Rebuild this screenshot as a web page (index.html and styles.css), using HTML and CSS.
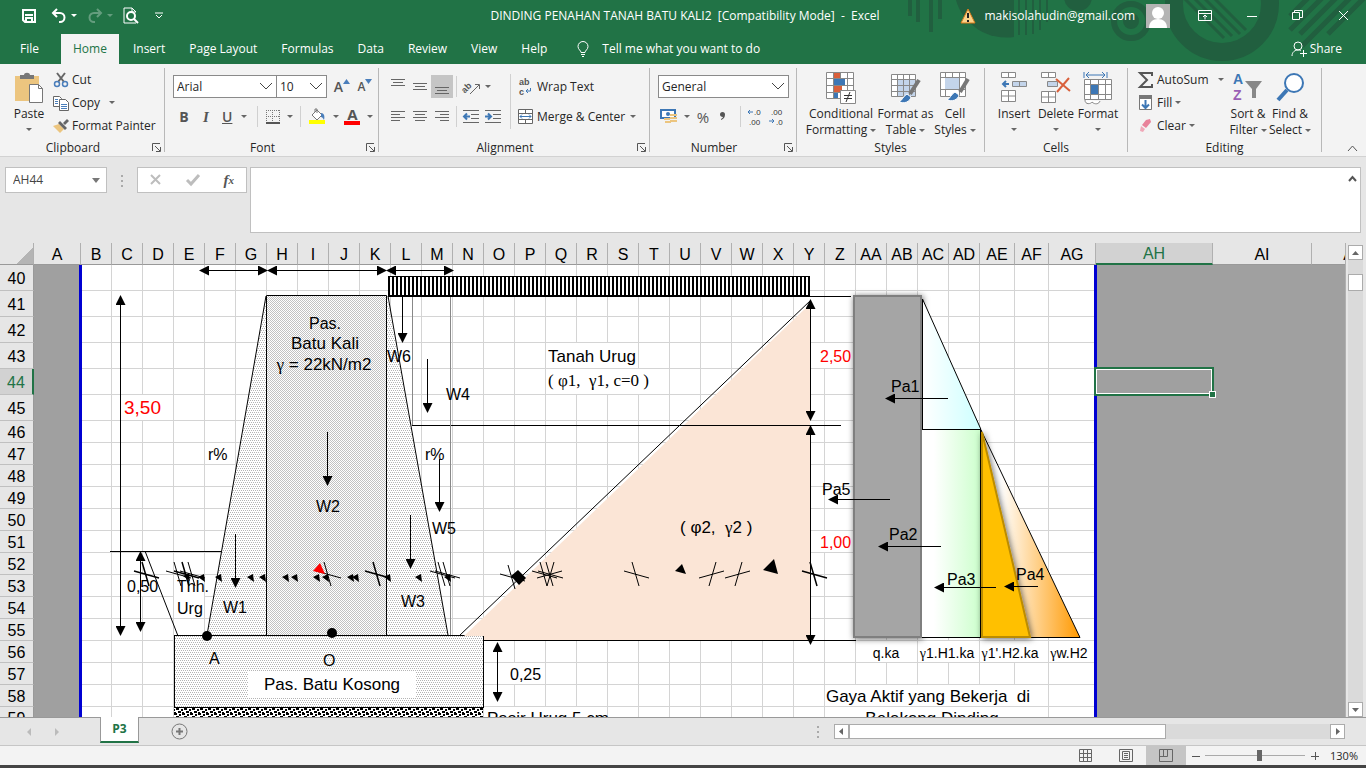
FILE: index.html
```html
<!DOCTYPE html>
<html lang="en">
<head>
  <meta charset="UTF-8">
  <title>DINDING PENAHAN TANAH BATU KALI2 - Excel</title>
  <meta name="viewport" content="width=device-width, initial-scale=1.0">
  <link rel="stylesheet" href="styles.css">
</head>
<body>
  <header class="top">
    <svg class="top-art" width="470" height="64" viewBox="896 0 470 64" aria-hidden="true">
      <g fill="none" stroke="#215f3f" stroke-width="4">
        <path d="M910 0V16M918 0V22M931 0V32M940 0V19" />
        <path d="M1019 0V35M1026 0V35M1033 0V34M1040 0V30M1047 0V22" stroke-width="2" />
        <circle cx="1131" cy="21" r="17" stroke-width="6" />
        <circle cx="1222" cy="4" r="48" stroke-width="18" />
        <path d="M1182 -4L1224 38M1190 -6L1232 36M1198 -8L1240 34M1206 -10L1246 30" stroke-width="3" />
        <path d="M1290 16L1312 -6M1290 30L1326 -6M1300 34L1340 -6M1302 46L1354 -6M1328 34L1366 -4" stroke-width="5" />
      </g>
      <g fill="#215f3f">
        <path d="M956 0H1014V37A52 50 0 0 1 956 0Z" />
        <circle cx="1131" cy="21" r="8" />
        <circle cx="1078" cy="-3" r="14" />
      </g>
    </svg>
    <div class="titlebar">
      <div class="quick">
        <button aria-label="Save" class="save"><svg width="16" height="16" fill="none" stroke="#fff" stroke-width="2"><path d="M2 2h12v12H4l-2-2z" /><path d="M4 7h8M5 14v-4h6v4" /></svg></button>
        <button aria-label="Undo" class="split"><svg width="16" height="16" fill="none" stroke="#fff" stroke-width="2"><path d="M6 1L2 5l4 4M2 5h7a4 4 0 0 1 0 9H8" /></svg><i class="caret"></i></button>
        <button aria-label="Redo" class="split faded"><svg width="16" height="16" fill="none" stroke="#fff" stroke-width="2"><path d="M10 1l4 4-4 4M14 5H7a4 4 0 0 0 0 9h1" /></svg><i class="caret"></i></button>
        <button aria-label="Print Preview" class="preview"><svg width="16" height="17" fill="none" stroke="#fff"><path d="M13 16H1V1h8l4 4M9 1v4h4" /><circle cx="8" cy="9" r="4" stroke-width="2" /><path d="M11 12l4 4" stroke-width="2" /></svg></button>
        <button aria-label="Customize Quick Access Toolbar"><svg width="10" height="8" fill="none" stroke="#fff"><path d="M1 1h8M2 3l3 3 3-3" /></svg></button>
      </div>
      <h1>DINDING PENAHAN TANAH BATU KALI2&nbsp; [Compatibility Mode]&nbsp; -&nbsp; Excel</h1>
      <div class="account">
        <svg width="16" height="16"><path d="M8 1L15 15H1z" fill="#fbd38a" stroke="#d87a1a" /><path d="M8 5v5M8 12v2" stroke="#222" stroke-width="2" /></svg>
        <span class="mail">makisolahudin@gmail.com</span>
        <svg class="avatar" width="24" height="24"><rect width="24" height="24" fill="#b4b4b4" /><circle cx="12" cy="9" r="6" fill="#fff" /><path d="M3 24c0-6 4-9 9-9s9 3 9 9z" fill="#fff" /></svg>
        <button aria-label="Ribbon Display Options"><svg width="14" height="11" fill="none" stroke="#fff"><path d="M.5.5h13v10H.5zM.5 3.500h13M7 9.500V5M5 7l2-2 2 2" /></svg></button>
        <button aria-label="Minimize"><svg width="10" height="10" stroke="#fff"><path d="M0 5.500h10" /></svg></button>
        <button aria-label="Restore"><svg width="11" height="11" fill="none" stroke="#fff"><path d="M.5 2.500h7v7h-7zM2.500 2.500v-2h8v7h-3" /></svg></button>
        <button aria-label="Close"><svg width="11" height="11" stroke="#fff"><path d="M1 1l9 9M10 1l-9 9" /></svg></button>
      </div>
    </div>
    <nav class="tabs">
      <button class="file">File</button>
      <button class="active">Home</button>
      <button>Insert</button>
      <button>Page Layout</button>
      <button>Formulas</button>
      <button>Data</button>
      <button>Review</button>
      <button>View</button>
      <button>Help</button>
      <button class="tell"><svg width="12" height="16" fill="none" stroke="#fff"><path d="M4 11.500c0-2-3-3-3-6a5 5 0 0 1 10 0c0 3-3 4-3 6zM4 13.500h4M5 15.500h2" /></svg>Tell me what you want to do</button>
      <button class="share"><svg width="16" height="16" fill="none" stroke="#fff"><circle cx="7" cy="5" r="4" /><path d="M1 15c0-4 3-6 6-6 1 0 2 0 3 1M12.500 9v7M9 12.500h7" /></svg>Share</button>
    </nav>
  </header>

  <section class="ribbon">
    <div class="group g-clipboard">
      <div class="tools">
        <button class="big"><svg width="30" height="32"><path d="M1 4h24v25H1z" fill="#ecc57f" /><path d="M6 7V3h4c0-3 6-3 6 0h4v4z" fill="#777" /><path d="M15.500 12.500h9l4 4v14h-13z" fill="#fff" stroke="#777" /><path d="M24.500 12.500v4h4" fill="none" stroke="#777" /></svg>Paste<i class="caret"></i></button>
        <div class="stack">
          <button class="small"><svg width="16" height="16" fill="none" stroke-width="2"><path d="M4 1l7 9M12 1L5 10" stroke="#666" /><circle cx="4" cy="12" r="2.500" stroke="#4a7ebb" stroke-width="1.500" /><circle cx="12" cy="12" r="2.500" stroke="#4a7ebb" stroke-width="1.500" /></svg>Cut</button>
          <button class="small"><svg width="16" height="16" fill="#fff" stroke="#666"><path d="M.5 1.500h6l2 2v8h-8z" /><path d="M6.500 4.500h6l3 3v8h-9z" /><path d="M2 4.500h3M2 6.500h3M2 8.500h3M8 9.500h6M8 11.500h6M8 13.500h6" stroke="#4a7ebb" /></svg>Copy<i class="caret wide"></i></button>
          <button class="small"><svg width="16" height="16"><path d="M0 8l6-2 5 5-4 4z" fill="#ecc57f" /><path d="M5 5l2-2 7 7-2 2zM10 5l4-4 2 2-4 4z" fill="#666" /></svg>Format Painter</button>
        </div>
      </div>
      <footer>Clipboard</footer><button class="launch" aria-label="Clipboard settings"><svg width="9" height="9" fill="none" stroke="#555"><path d="M.5 8V.5H8M3 3l5 5M8.500 4v4.500H4" /></svg></button>
    </div>

    <div class="group g-font">
      <div class="rows">
        <div class="row">
          <select class="font-name" aria-label="Font"><option>Arial</option></select><select class="font-size" aria-label="Font size"><option>10</option></select>
          <button class="letter grow" aria-label="Increase font size">A<svg width="7" height="5"><path d="M0 5l3.500-5L7 5z" fill="#4a7ebb" /></svg></button>
          <button class="letter shrink" aria-label="Decrease font size">A<svg width="7" height="5"><path d="M0 0l3.500 5L7 0z" fill="#4a7ebb" /></svg></button>
        </div>
        <div class="row">
          <button class="letter"><b>B</b></button>
          <button class="letter"><em>I</em></button>
          <button class="letter under"><u>U</u><i class="caret"></i></button>
          <span class="sep"></span>
          <button aria-label="Borders"><svg width="14" height="14" fill="none" stroke="#777"><path d="M.5 0v13M6.500 0v13M13.500 0v13M0 .5h14M0 6.500h14" stroke-dasharray="1 1" /><path d="M0 13h14" stroke-width="2" stroke="#555" /></svg><i class="caret"></i></button>
          <span class="sep"></span>
          <button aria-label="Fill Color"><svg width="17" height="17"><path d="M3 7l5-5 5 5-5 5z" fill="#fff" stroke="#777" /><path d="M6 4V1h2v4" fill="none" stroke="#777" /><path d="M12 5c3 0 4 3 3 7-1-2-2-3-3-3z" fill="#4a7ebb" /><path d="M0 12h16v4H0z" fill="#ff0" /></svg><i class="caret"></i></button>
          <button aria-label="Font Color" class="font-color"><span>A</span><i class="caret"></i></button>
        </div>
      </div>
      <footer>Font</footer><button class="launch" aria-label="Font settings"><svg width="9" height="9" fill="none" stroke="#555"><path d="M.5 8V.5H8M3 3l5 5M8.500 4v4.500H4" /></svg></button>
    </div>

    <div class="group g-align">
      <div class="tools">
        <div class="rows">
          <div class="row">
            <button class="ic" aria-label="Top Align"><svg width="14" height="18" stroke="#666"><path d="M0 1.500h14M2 4.500h10M0 7.500h14" /></svg></button>
            <button class="ic" aria-label="Middle Align"><svg width="14" height="16" stroke="#666"><path d="M0 4.500h14M2 7.500h10M0 10.500h14" /></svg></button>
            <button class="ic on" aria-label="Bottom Align"><svg width="14" height="14" stroke="#666"><path d="M0 7.500h14M2 10.500h10M0 13.500h14" /></svg></button>
            <span class="sep"></span>
            <button aria-label="Orientation"><svg width="17" height="16" stroke="#666" fill="none"><text class="glyph" x="-2" y="10" transform="rotate(-45 5 9)" fill="#555" stroke="none">ab</text><path d="M6 15L15 6M11 5.500h4.500V10" /></svg><i class="caret"></i></button>
          </div>
          <div class="row">
            <button class="ic" aria-label="Align Left"><svg width="14" height="12" stroke="#666"><path d="M0 .5h14M0 3.500h9M0 6.500h14M0 9.500h9" /></svg></button>
            <button class="ic" aria-label="Center"><svg width="14" height="12" stroke="#666"><path d="M0 .5h14M2 3.500h10M0 6.500h14M2 9.500h10" /></svg></button>
            <button class="ic" aria-label="Align Right"><svg width="14" height="12" stroke="#666"><path d="M0 .5h14M5 3.500h9M0 6.500h14M5 9.500h9" /></svg></button>
            <span class="sep"></span>
            <button class="ic" aria-label="Decrease Indent"><svg width="16" height="14" stroke="#666"><path d="M0 .5h16M8 4.500h8M8 8.500h8M0 12.500h16" /><path d="M7 6.500H1M4 3.500L1 6.500l3 3" fill="none" stroke="#3d77b5" stroke-width="2" /></svg></button>
            <button class="ic" aria-label="Increase Indent"><svg width="16" height="14" stroke="#666"><path d="M0 .5h16M8 4.500h8M8 8.500h8M0 12.500h16" /><path d="M0 6.500h6M3 3.500l3 3-3 3" fill="none" stroke="#3d77b5" stroke-width="2" /></svg></button>
          </div>
        </div>
        <span class="sep tall"></span>
        <div class="rows">
          <button class="row small"><svg width="16" height="18"><text class="glyph" x="1" y="7" fill="#555">ab</text><text class="glyph" x="1" y="17" fill="#555">c</text><path d="M12.500 10v3H8M10 11l-2 2 2 2" fill="none" stroke="#3d77b5" /></svg>Wrap Text</button>
          <button class="row small"><svg width="16" height="16" fill="none" stroke="#666"><path d="M.5.5h14v14H.5zM.5 4.500h14M.5 10.500h14M7.500.5v4M7.500 10.500v4" fill="#fff" /><path d="M2 7.500h11M4 5.500l-2 2 2 2M11 5.500l2 2-2 2" stroke="#3d77b5" /></svg>Merge &amp; Center<i class="caret wide"></i></button>
        </div>
      </div>
      <footer>Alignment</footer><button class="launch" aria-label="Alignment settings"><svg width="9" height="9" fill="none" stroke="#555"><path d="M.5 8V.5H8M3 3l5 5M8.500 4v4.500H4" /></svg></button>
    </div>

    <div class="group g-number">
      <div class="rows">
        <div class="row"><select class="num-format" aria-label="Number format"><option>General</option></select></div>
        <div class="row">
          <button class="money" aria-label="Accounting format"><svg width="17" height="17"><path d="M1 2h14v8H1z" fill="#fff" stroke="#3d77b5" stroke-width="2" /><circle cx="8" cy="6" r="2" fill="#3d77b5" /><g fill="#ecc57f"><rect x="10" y="6" width="7" height="2" /><rect x="10" y="9" width="7" height="2" /><rect x="10" y="12" width="7" height="2" /><rect x="4" y="10" width="6" height="2" /><rect x="5" y="13" width="6" height="2" /></g></svg><i class="caret"></i></button>
          <button class="letter percent">%</button>
          <button class="letter comma" aria-label="Comma style"><svg width="6" height="9"><path d="M0 2.500a2.500 2.500 0 0 1 5 0C5 5 4 7 1 8V7c1-1 2-1 2-2C1 5 0 4 0 2.500z" fill="#555" /></svg></button>
          <span class="sep"></span>
          <button aria-label="Increase Decimal"><svg width="16" height="18"><text class="digit" x="7" y="7">.0</text><text class="digit" x="2" y="17">.00</text><path d="M6 4H1M3 2L1 4l2 2" fill="none" stroke="#3d77b5" /></svg></button>
          <button aria-label="Decrease Decimal"><svg width="16" height="18"><text class="digit" x="2" y="7">.00</text><text class="digit" x="7" y="17">.0</text><path d="M0 13h5M3 11l2 2-2 2" fill="none" stroke="#3d77b5" /></svg></button>
        </div>
      </div>
      <footer>Number</footer><button class="launch" aria-label="Number settings"><svg width="9" height="9" fill="none" stroke="#555"><path d="M.5 8V.5H8M3 3l5 5M8.500 4v4.500H4" /></svg></button>
    </div>

    <div class="group g-styles">
      <div class="tools">
        <button class="big w70"><svg width="30" height="32" fill="none" stroke="#888"><path d="M.5.5h27v26H.5z" fill="#fff" /><path d="M8 1h6v6H8zM8 14h8v6H8z" fill="#d9603b" stroke="none" /><path d="M8 7h11v6H8zM8 21h4v5H8z" fill="#3d77b5" stroke="none" /><path d="M.5 6.500h27M.5 13.500h27M.5 20.500h27M7.500.5v26M14.500.5v6M21.500.5v26" /><path d="M14.500 18.500h15v13h-15z" fill="#fff" /><path d="M18 23.500h8M18 26.500h8M24 20l-4 10" stroke="#333" /></svg><span>Conditional<br>Formatting<i class="caret"></i></span></button>
        <button class="big w58"><svg width="30" height="32" fill="none" stroke="#888"><path d="M.5 2.500h24v22H.5z" fill="#fff" /><path d="M7 8h17v16H7z" fill="#c3d4ea" stroke="none" /><path d="M.5 7.500h24M.5 13.500h24M.5 19.500h24M6.500 2.500v22M12.500 2.500v22M18.500 2.500v22" /><path d="M28 8l-9 14" stroke="#777" stroke-width="4" /><path d="M8 30c3-1 4-6 8-8l4 3c-1 5-7 7-12 5z" fill="#3d77b5" stroke="#fff" /></svg><span>Format as<br>Table<i class="caret"></i></span></button>
        <button class="big w42"><svg width="30" height="32" fill="none" stroke="#888"><path d="M.5.5h25v24H.5z" fill="#fff" /><path d="M.5 5.500h25M.5 17.500h25M5.500.5v24M19.500.5v24M12.500.5v5" /><path d="M5 6h14v11H5z" fill="#c3d4ea" stroke="none" /><path d="M28 7l-8 13" stroke="#777" stroke-width="4" /><path d="M7 28c3-1 4-6 8-8l4 3c-1 5-7 7-12 5z" fill="#3d77b5" stroke="#fff" /></svg><span>Cell<br>Styles<i class="caret"></i></span></button>
      </div>
      <footer>Styles</footer>
    </div>

    <div class="group g-cells">
      <div class="tools">
        <button class="big w42"><svg width="28" height="32" fill="#fff" stroke="#888"><path d="M1.500.5h14v5h-14zM8.500.5v5M1.500 18.500h14v11h-14zM8.500 18.500v11M1.500 24h14" /><path d="M12.500 9.500h14v5h-14zM19.500 9.500v5" fill="#c3d4ea" /><path d="M9 12H3M6 9l-3 3 3 3" fill="none" stroke="#3d77b5" stroke-width="2" /></svg>Insert<i class="caret"></i></button>
        <button class="big w42"><svg width="30" height="32" fill="#fff" stroke="#888"><path d="M.5.5h14v5H.5zM7.500.5v5M.5 19.500h14v11H.5zM7.500 19.500v11M.5 25h14" /><path d="M6.500 9.500h10v5h-10z" fill="#c3d4ea" /><path d="M15 7l14 12M28 6L16 20" fill="none" stroke="#d9603b" stroke-width="2" /></svg>Delete<i class="caret"></i></button>
        <button class="big w42"><svg width="30" height="34" fill="#fff" stroke="#888"><path d="M1.500 7.500h27v20h-27zM1.500 12.500h27M1.500 22.500h27M7.500 7.500v20M15.500 7.500v20M22.500 7.500v20M2 28c0 5 6 4 7 2 3 3 7 2 8-1" /><path d="M8 13h7v9H8z" fill="#3d77b5" stroke="none" /><path d="M1 0v6M24 0v6M3 3h19M6 0L3 3l3 3M19 0l3 3-3 3" fill="none" stroke="#3d77b5" /></svg>Format<i class="caret"></i></button>
      </div>
      <footer>Cells</footer>
    </div>

    <div class="group g-editing">
      <div class="tools">
        <div class="stack">
          <button class="small"><svg width="16" height="16" fill="none" stroke="#555" stroke-width="2"><path d="M14 4V1H2l7 7-7 7h12v-3" /></svg>AutoSum<i class="caret wide"></i></button>
          <button class="small"><svg width="16" height="16" fill="#fff" stroke="#777"><path d="M1.500.5h12v14h-12z" /><path d="M1 0h13v4H1z" fill="#777" stroke="none" /><path d="M7.500 5v8M4 9.500l3.500 3.500L11 9.500" fill="none" stroke="#3d77b5" stroke-width="2" /></svg>Fill<i class="caret"></i></button>
          <button class="small"><svg width="16" height="16"><path d="M8 2l4-1 1 3-5 6-4-3z" fill="#e8829a" /><path d="M3 8l4 3-2 3-3-1z" fill="#f0a8b8" /></svg>Clear<i class="caret"></i></button>
        </div>
        <button class="big w42"><svg width="30" height="32"><text class="az" x="0" y="12" fill="#3d77b5">A</text><text class="az" x="0" y="28" fill="#9a5fb5">Z</text><path d="M12 9h17l-6 8v9h-4v-9z" fill="#888" /></svg><span>Sort &amp;<br>Filter<i class="caret"></i></span></button>
        <button class="big w42"><svg width="30" height="32" fill="none" stroke="#3d77b5"><circle cx="19" cy="11" r="9" fill="#fff" stroke-width="2" /><path d="M12 18L3 28" stroke-width="4" /></svg><span>Find &amp;<br>Select<i class="caret"></i></span></button>
      </div>
      <footer>Editing</footer>
    </div>
    <button class="collapse" aria-label="Collapse the Ribbon"><svg width="11" height="7" fill="none" stroke="#555"><path d="M1 6l4.500-5L10 6" /></svg></button>
  </section>

  <section class="formula">
    <select class="name-box" aria-label="Name Box"><option>AH44</option></select>
    <svg class="grip" width="3" height="12" fill="#aaa"><path d="M0 0h2v2H0zM0 5h2v2H0zM0 10h2v2H0z" /></svg>
    <div class="fx">
      <button aria-label="Cancel"><svg width="12" height="12" stroke="#bdbdbd" stroke-width="2"><path d="M1 1l9 9M10 1l-9 9" /></svg></button>
      <button aria-label="Enter"><svg width="14" height="12" fill="none" stroke="#bdbdbd" stroke-width="3"><path d="M1 6l4 4 8-9" /></svg></button>
      <button class="fn" aria-label="Insert Function">f<sub>x</sub></button>
    </div>
    <div class="entry">
      <textarea aria-label="Formula Bar"></textarea>
      <button aria-label="Collapse Formula Bar"><svg width="9" height="6" fill="none" stroke="#555" stroke-width="2"><path d="M1 5l3.500-4L8 5" /></svg></button>
    </div>
  </section>

  <main class="sheet">
    <div class="grid">
      <table id="cells">
        <colgroup></colgroup>
        <thead><tr></tr></thead>
        <tbody></tbody>
      </table>
      <svg class="drawing" width="1312" height="464" viewBox="34 265 1312 464">
        <defs>
          <pattern id="dense" width="4" height="4" patternUnits="userSpaceOnUse"><path d="M0 0h1v1H0zM2 0h1v1H2zM1 1h1v1H1zM3 1h1v1H3zM0 2h1v1H0zM2 2h1v1H2zM1 3h1v1H1zM3 3h1v1H3z" fill="#c2c2c2" /></pattern>
          <pattern id="sparse" width="4" height="4" patternUnits="userSpaceOnUse"><path d="M0 0h1v1H0zM2 0h1v1H2zM1 2h1v1H1zM3 2h1v1H3z" fill="#b4b4b4" /></pattern>
          <pattern id="bars" x="388" width="4" height="20" patternUnits="userSpaceOnUse"><path d="M0 0h2v20H0z" /></pattern>
          <pattern id="gravel" width="8" height="8" y="708" patternUnits="userSpaceOnUse"><path d="M0 0h3v2H0zM5 1h2v2H5zM2 3h3v2H2zM6 4h2v3H6zM0 5h1v2H0zM3 6h2v2H3z" /></pattern>
          <linearGradient id="cyan"><stop offset="0" stop-color="#fff" /><stop offset="1" stop-color="#cff" /></linearGradient>
          <linearGradient id="green"><stop offset=".2" stop-color="#fff" /><stop offset="1" stop-color="#cfc" /></linearGradient>
          <linearGradient id="orange"><stop offset=".2" stop-color="#fff" /><stop offset="1" stop-color="#f90" /></linearGradient>
          <filter id="shadow" x="-20%" y="-20%" width="140%" height="140%"><feDropShadow dx="1" dy="1" stdDeviation="3" flood-opacity=".6" /></filter>
          <marker id="head" markerWidth="10" markerHeight="10" refX="9" refY="5" orient="auto-start-reverse" markerUnits="userSpaceOnUse"><path d="M0 0L10 5 0 10z" /></marker>
          <path id="cross" d="M-13 -4L12 3M-5 -13L2 11" />
          <path id="chip" d="M-4 -1L2 -4 3 4z" />
        </defs>

        <!-- merged cells hide the grid lines -->
        <path fill="#fff" d="M112 395h60v25h-60zM112 575h60v21h-60zM174 575h30v43h-30zM811 343h43v25h-43zM811 531h43v21h-43zM484 663h60v21h-60zM856 641h61v21h-61zM918 641h61v21h-61zM980 641h68v21h-68zM1049 641h45v21h-45zM825 685h223v21H825zM825 707h223v22H825zM484 707h123v22H484zM546 343h92v25h-92zM546 369h108v25H546z" />

        <!-- wall and footing -->
        <path d="M266 296L207 635H266zM387 296L448 635H387zM174 636h309v72H174z" fill="#fff" />
        <path d="M266 296L207 635H266zM387 296L448 635H387zM174 636h309v72H174z" fill="url(#sparse)" />
        <rect x="266" y="295" width="121" height="340" fill="#fff" />
        <rect x="266" y="295" width="121" height="340" fill="url(#dense)" />
        <rect x="174" y="708" width="309" height="20" fill="#fff" />
        <rect x="174" y="708" width="309" height="20" fill="url(#gravel)" />
        <g stroke="#000" fill="none">
          <path d="M266.500 635V295.500H386.500V635" />
          <path d="M266 296L207 635M388 296L448 635" />
          <rect x="174.500" y="635.500" width="309" height="72" />
        </g>
        <rect x="248" y="671" width="168" height="26" fill="#fff" />

        <!-- backfill -->
        <path d="M810 304V640H484V617z" fill="#fbe5d6" />
        <path d="M484 617V636H464z" fill="#fbe5d6" />
        <rect x="388.500" y="276.500" width="421" height="19" fill="#fff" />
        <rect x="388.500" y="276.500" width="421" height="19" fill="url(#bars)" stroke="#000" />
        <g fill="none" stroke="#000">
          <path d="M459 636L811 300M388 296.500H851M412 425.500H841M484 640.500H856M110 551.500H221M145 551L178 636" />
          <path d="M412.500 297V425M450.500 297V635" stroke="#888" />
        </g>

        <!-- pressure diagram -->
        <rect x="854" y="296" width="67" height="341" fill="#a5a5a5" stroke="#7f7f7f" stroke-width="2" filter="url(#shadow)" />
        <g stroke="#000">
          <path d="M922.500 299V429.500H981z" fill="url(#cyan)" />
          <rect x="922" y="430" width="59" height="207" fill="url(#green)" stroke="none" />
          <path d="M922 637.500H1079M922 429.500H981M980.500 430V637" />
          <path d="M981 430L1080 637.500H981z" fill="url(#orange)" />
        </g>
        <path d="M982 432L1030 637H982z" fill="#ffc000" stroke="#bc8c00" stroke-width="2" filter="url(#shadow)" />

        <!-- dimensions and force arrows -->
        <g class="dimension" stroke="#000">
          <path d="M200 270.500H267" /><path d="M268 270.500H386" /><path d="M387 270.500H453" />
          <path d="M120.500 296V635" /><path d="M140.500 552V631" /><path d="M497.500 643V701" />
          <path d="M810.500 300V420" /><path d="M810.500 426V644" />
        </g>
        <g class="force" stroke="#000">
          <path d="M402.500 296V342" /><path d="M427.500 359V412" /><path d="M327.500 432V485" />
          <path d="M439.500 459V511" /><path d="M410.500 515V568" /><path d="M235.500 534V587" />
          <path d="M948 398.500H886" /><path d="M890 499.500H829" /><path d="M941 546.500H879" />
          <path d="M996 587.500H935" /><path d="M1038 586.500H1005" />
        </g>

        <!-- collapsed shapes along row 53 -->
        <g fill="none" stroke="#000">
          <use href="#cross" x="147" y="575" stroke-width="1.500" /><use href="#cross" x="179" y="575" />
          <use href="#cross" x="187" y="575" stroke-width="1.500" /><use href="#cross" x="193" y="575" />
          <use href="#cross" x="329" y="575" /><use href="#cross" x="378" y="575" stroke-width="1.500" />
          <use href="#cross" x="443" y="575" /><use href="#cross" x="448" y="575" />
          <use href="#cross" x="513" y="578" /><use href="#cross" x="545" y="575" /><use href="#cross" x="551" y="575" />
          <use href="#cross" x="637" y="575" /><use href="#cross" x="815" y="575" stroke-width="1.500" />
          <g transform="scale(-1 1)"><use href="#cross" x="-549" y="575" /><use href="#cross" x="-711" y="575" /><use href="#cross" x="-737" y="575" /></g>
        </g>
        <g>
          <use href="#chip" x="187" y="577" /><use href="#chip" x="202" y="578" /><use href="#chip" x="219" y="578" />
          <use href="#chip" x="251" y="578" /><use href="#chip" x="263" y="578" /><use href="#chip" x="286" y="578" />
          <use href="#chip" x="295" y="578" /><use href="#chip" x="317" y="578" /><use href="#chip" x="326" y="578" />
          <use href="#chip" x="351" y="578" /><use href="#chip" x="356" y="578" /><use href="#chip" x="388" y="578" />
          <use href="#chip" x="419" y="578" /><use href="#chip" x="448" y="578" />
          <path d="M511 576L518 570 526 578 519 585zM675 571L682 564 686 574zM763 570L774 559 778 574z" />
          <path d="M313 571L320 563 325 574z" fill="#f00" />
          <circle cx="207" cy="636" r="5" /><circle cx="332" cy="633" r="5" />
        </g>

        <g class="labels">
          <text x="325" y="329" class="mid">Pas.</text>
          <text x="325" y="349" class="mid box">Batu Kali</text>
          <text x="324" y="370" class="mid box"><tspan class="sym">γ</tspan> = 22kN/m2</text>
          <text x="387" y="362">W6</text>
          <text x="446" y="400">W4</text>
          <text x="316" y="512">W2</text>
          <text x="432" y="534">W5</text>
          <text x="401" y="607">W3</text>
          <text x="223" y="613">W1</text>
          <text x="208" y="460">r%</text>
          <text x="425" y="460">r%</text>
          <text x="124" y="414" class="red large">3,50</text>
          <text x="127" y="592">0,50</text>
          <text x="177" y="592">Thh.</text>
          <text x="177" y="614">Urg</text>
          <text x="209" y="664">A</text>
          <text x="323" y="666">O</text>
          <text x="332" y="690" class="mid box">Pas. Batu Kosong</text>
          <text x="510" y="680">0,25</text>
          <text x="487" y="724" class="box">Pasir Urug 5 cm</text>
          <text x="548" y="362" class="box">Tanah Urug</text>
          <text x="548" y="386" class="sym box">( φ1,&#160; γ1, c=0 )</text>
          <text x="680" y="533" class="box">( φ2,&#160; <tspan class="sym">γ</tspan>2 )</text>
          <text x="820" y="362" class="red">2,50</text>
          <text x="820" y="548" class="red">1,00</text>
          <text x="891" y="392">Pa1</text>
          <text x="822" y="495">Pa5</text>
          <text x="889" y="540">Pa2</text>
          <text x="947" y="585">Pa3</text>
          <text x="1016" y="580">Pa4</text>
          <text x="886" y="658" class="mid note">q.ka</text>
          <text x="947" y="658" class="mid note"><tspan class="sym">γ</tspan>1.H1.ka</text>
          <text x="1010" y="658" class="mid note"><tspan class="sym">γ</tspan>1'.H2.ka</text>
          <text x="1069" y="658" class="mid note"><tspan class="sym">γ</tspan>w.H2</text>
          <text x="928" y="702" class="mid box">Gaya Aktif yang Bekerja&#160; di</text>
          <text x="932" y="724" class="mid box">Belakang Dinding</text>
        </g>

        <!-- print area edges and the selected cell -->
        <path d="M79 265h3v464h-3zM1094 265h3v464h-3z" fill="#0000d2" />
        <rect x="1096.500" y="369.500" width="115" height="24" fill="#a0a0a0" stroke="#fff" />
        <rect x="1095" y="368" width="118" height="27" fill="none" stroke="#217346" stroke-width="2" />
        <rect x="1209.500" y="391.500" width="6" height="6" fill="#217346" stroke="#fff" />
      </svg>
    </div>
    <div class="vscroll">
      <button aria-label="Scroll up"><svg width="7" height="4"><path d="M0 4l3.500-4L7 4z" fill="#666" /></svg></button>
      <div class="track"><span class="thumb"></span></div>
      <button aria-label="Scroll down"><svg width="7" height="4"><path d="M0 0h7L3.500 4z" fill="#666" /></svg></button>
    </div>
  </main>

  <section class="sheetbar">
    <button class="nav" aria-label="Previous sheets"><svg width="4" height="8"><path d="M4 0v8L0 4z" fill="#bbb" /></svg></button>
    <button class="nav" aria-label="Next sheets"><svg width="4" height="8"><path d="M0 0v8l4-4z" fill="#bbb" /></svg></button>
    <button class="sheet-tab">P3</button>
    <button class="add" aria-label="New sheet"><svg width="17" height="17" fill="none" stroke="#777"><circle cx="8.500" cy="8.500" r="7.500" /><path d="M8.500 5v7M5 8.500h7" stroke-width="2" /></svg></button>
    <div class="hside">
      <svg class="grip" width="3" height="12" fill="#aaa"><path d="M0 0h2v2H0zM0 5h2v2H0zM0 10h2v2H0z" /></svg>
      <div class="hscroll">
        <button aria-label="Scroll left"><svg width="4" height="7"><path d="M4 0v7L0 3.500z" fill="#666" /></svg></button>
        <div class="track"><span class="thumb"></span></div>
        <button aria-label="Scroll right"><svg width="4" height="7"><path d="M0 0v7l4-3.500z" fill="#666" /></svg></button>
      </div>
    </div>
  </section>

  <footer class="status">
    <button aria-label="Normal"><svg width="14" height="13" fill="none" stroke="#666"><path d="M.5.500h12v12H.5zM.5 4.500h12M.5 8.500h12M4.500.5v12M8.500.5v12" /></svg></button>
    <button aria-label="Page Layout"><svg width="14" height="13" fill="none" stroke="#666"><path d="M.5.500h13v12H.5zM3.500 2.500h7v8h-7zM5 4.500h4M5 6.500h4M5 8.500h4" /></svg></button>
    <button class="on" aria-label="Page Break Preview"><svg width="14" height="13" fill="none" stroke="#666"><path d="M.5.500h13v12H.5zM.5 7.500h8v-7M4.500.5v7" /></svg></button>
    <button class="step" aria-label="Zoom out"><svg width="8" height="8" stroke="#555"><path d="M0 4.500h8" /></svg></button>
    <input type="range" min="0" max="100" value="55" aria-label="Zoom">
    <button class="step" aria-label="Zoom in"><svg width="8" height="8" stroke="#555"><path d="M0 4.500h8M4.500 0v8" /></svg></button>
    <span class="percent">130%</span>
  </footer>

  <script>
    // Column widths and row heights of the visible range
    const columns = [["A", 47]];
    "B C D E F G H I J K L M N O P Q R S T U V W X Y Z AA AB AC AD".split(" ").forEach(c => columns.push([c, 31]));
    columns.push(["AE", 35], ["AF", 34], ["AG", 47], ["AH", 117], ["AI", 99], ["AJ", 82]);
    const outside = ["A", "AH", "AI", "AJ"];

    const table = document.getElementById('cells');
    const cols = table.querySelector('colgroup');
    const head = table.querySelector('thead tr');
    const body = table.querySelector('tbody');

    cols.innerHTML = '<col style="width:34px">' + columns.map(c => `<col style="width:${c[1]}px">`).join('');
    head.innerHTML = '<th class="corner"></th>' + columns.map(c => `<th class="${c[0] === 'AH' ? 'current' : ''}">${c[0]}</th>`).join('');

    for (let row = 40; row < 60; row++) {
      const tr = document.createElement('tr');
      tr.className = row < 46 ? 'tall' : '';
      tr.innerHTML = `<th class="${row === 44 ? 'current' : ''}">${row}</th>` +
        columns.map(c => `<td class="${outside.includes(c[0]) ? 'outside' : ''}"></td>`).join('');
      body.appendChild(tr);
    }
  </script>
</body>
</html>
```
FILE: styles.css
```css
/* Reset and base styles */
* { box-sizing: border-box; margin: 0; padding: 0; }
body {
  font-family: "Open Sans", "Noto Sans", sans-serif;
  font-size: 12px;
  line-height: 16px;
  color: #262626;
  background: #e6e6e6;
  height: 100vh;
  display: flex;
  flex-direction: column;
  overflow: hidden;
}
button, select, textarea {
  font: inherit;
  color: inherit;
  background: none;
  border: none;
  white-space: nowrap;
}
button {
  display: flex;
  align-items: center;
  justify-content: center;
}
svg { flex: none; overflow: visible; }
.caret {
  flex: none;
  display: inline-block;
  border: 3px solid transparent;
  border-top-color: #666;
  border-bottom: none;
  vertical-align: middle;
}

/* Title bar and tabs */
.top {
  position: relative;
  background: #217346;
  color: #fff;
  flex: none;
}
.top-art { position: absolute; top: 0; right: 0; overflow: hidden; }
.titlebar, .tabs { position: relative; display: flex; }
.titlebar { height: 31px; align-items: center; }
.titlebar h1 { font-size: 12px; font-weight: 400; white-space: nowrap; }
.quick { flex: 1; display: flex; align-items: center; padding-left: 21px; gap: 10px; }
.quick .save { margin-right: 4px; }
.quick .split { gap: 4px; }
.quick .caret { border-top-color: #fff; }
.faded { opacity: .3; }
.quick .preview { margin-right: 5px; }
.account {
  flex: 1;
  display: flex;
  align-items: center;
  justify-content: flex-end;
  padding-right: 17px;
}
.account .mail { margin: 0 11px 0 8px; }
.account .avatar { margin-right: 28px; }
.account button + button { margin-left: 35px; }
.tabs { height: 33px; padding: 3px 24px 0 8px; }
.tabs button { padding: 0 12px; }
.tabs .file { margin-right: 10px; }
.tabs .active { background: #f3f3f3; color: #217346; margin-right: 2px; }
.tabs .tell { gap: 13px; padding-left: 18px; }
.tabs .share { margin-left: auto; padding: 0; gap: 3px; }

/* Ribbon */
.ribbon {
  flex: none;
  display: flex;
  height: 93px;
  padding: 4px 0;
  background: #f3f3f3;
  border-bottom: 1px solid #d2d2d2;
}
.group {
  position: relative;
  flex: none;
  display: flex;
  flex-direction: column;
  border-right: 1px solid #b8b8b8;
}
.group footer { margin: auto 0 -4px; text-align: center; }
.g-clipboard { width: 165px; }
.g-clipboard footer { padding-right: 18px; }
.g-font { width: 214px; padding-left: 8px; }
.g-font footer { padding-right: 26px; }
.g-align { width: 271px; padding-left: 8px; }
.g-align footer { padding-right: 26px; }
.g-number { width: 147px; padding-left: 8px; }
.g-number footer { padding-right: 26px; }
.g-styles { width: 188px; }
.g-cells { width: 143px; }
.g-editing { width: 194px; }
.g-styles .tools { padding-left: 8px; }
.g-cells .tools { padding-left: 8px; }
.g-editing .tools { padding-left: 10px; }
.g-clipboard .tools { padding-left: 10px; }
.launch { position: absolute; right: 3px; bottom: 0; }
.tools { display: flex; height: 72px; }
.stack, .rows { display: flex; flex-direction: column; }
.rows { gap: 7px; padding-top: 7px; }
.row { display: flex; align-items: center; height: 23px; }
.big {
  flex-direction: column;
  justify-content: flex-start;
  padding-top: 4px;
  width: 38px;
  margin-right: 5px;
}
.big svg { height: 34px; }
.big > .caret { margin-top: 6px; }
.big span .caret { margin-left: 3px; }
.w70 { width: 72px; margin: 0; }
.w58 { width: 57px; margin: 0; }
.w42 { width: 42px; margin: 0; }
.small { gap: 3px; height: 23px; justify-content: flex-start; }
.small .wide { margin-left: 6px; }
.g-editing .stack { width: 89px; }
.sep { width: 1px; height: 21px; background: #d0d0d0; }
.sep.tall { height: 55px; margin: 6px 7px 0 6px; }
.collapse { margin: auto 8px -2px auto; height: 12px; }

select {
  height: 23px;
  padding: 0 3px;
  background: #fff url("data:image/svg+xml,%3Csvg xmlns='http://www.w3.org/2000/svg' width='14' height='9' fill='none' stroke='%23444'%3E%3Cpath d='M1 1l6 6 6-6'/%3E%3C/svg%3E") no-repeat right 3px center;
  border: 1px solid #8a8a8a;
  appearance: none;
}
.font-name { width: 104px; }
.font-size { width: 51px; margin-left: -1px; }
.num-format { width: 131px; }

.letter { min-width: 22px; font-size: 14px; color: #555; gap: 5px; }
.g-font .row:first-child .letter { font-weight: 600; gap: 0; align-items: flex-start; }
.g-font .grow { margin-left: 4px; }
.g-font .shrink { font-size: 12px; margin-left: 1px; }
.letter em { font-family: "Liberation Serif", serif; font-weight: 700; font-size: 15px; }
.letter u { font-weight: 600; }
.g-font .under { gap: 9px; margin: 0 3px 0 5px; }
.g-font .sep { margin: 0 8px 0 7px; }
.g-font .row button:not(.letter) { gap: 7px; }
.g-font .font-color { margin-left: 5px; }
.font-color span {
  width: 16px;
  height: 17px;
  line-height: 13px;
  font-size: 15px;
  font-weight: 700;
  color: #555;
  border-bottom: 4px solid #f00;
}
.g-align .ic { width: 22px; height: 23px; }
.g-align .on { background: #c5c5c5; }
.g-align .sep:not(.tall) { margin: 0 3px; }
.g-align .row > button { gap: 4px; }
.g-align .row > button:not(.ic) { margin-left: 4px; }
.g-align .small .wide { margin-left: 2px; }
.glyph { font: 700 9px "Liberation Sans", sans-serif; }
.digit { font: 8px "Liberation Sans", sans-serif; fill: #333; }
.az { font: 700 14px "Liberation Sans", sans-serif; }
.g-number .row { gap: 6px; }
.g-number .money { gap: 7px; padding-left: 2px; }
.g-number .letter { min-width: 14px; }
.g-number .percent { font-size: 15px; }
.g-number .comma { margin-right: 4px; }

/* Formula bar */
.formula {
  flex: none;
  display: flex;
  align-items: flex-start;
  height: 86px;
  padding: 10px 5px 0;
}
.name-box, .fx, .entry { background-color: #fff; border: 1px solid #c0c0c0; }
.name-box {
  width: 102px;
  height: 26px;
  padding-left: 7px;
  color: #444;
  background-image: url("data:image/svg+xml,%3Csvg xmlns='http://www.w3.org/2000/svg' width='8' height='5' fill='%23777'%3E%3Cpath d='M0 0h8L4 5z'/%3E%3C/svg%3E");
  background-position: right 6px center;
}
.formula .grip { margin: 8px 13px 0 14px; }
.fx { display: flex; justify-content: space-around; width: 110px; height: 26px; }
.fx .fn { font: italic 700 15px "Liberation Serif", serif; color: #555; }
.fx sub { font-size: 11px; }
.entry { flex: 1; display: flex; align-items: flex-start; height: 66px; margin-left: 3px; }
.entry textarea { flex: 1; height: 100%; resize: none; padding: 3px; }
.entry button { width: 16px; height: 22px; }

/* Sheet */
.sheet { flex: 1; min-height: 0; display: flex; }
.grid {
  position: relative;
  flex: 1;
  min-width: 0;
  overflow: hidden;
  background: #a0a0a0;
  border-right: 1px solid #b0b0b0;
}
#cells {
  width: 1345px;
  table-layout: fixed;
  border-spacing: 0;
  font: 16px/19px "Liberation Sans", Arial, sans-serif;
  color: #000;
}
#cells th {
  height: 22px;
  padding-top: 2px;
  overflow: hidden;
  font-weight: 400;
  background: #e6e6e6;
  border-right: 1px solid #b0b0b0;
  border-bottom: 1px solid #999;
}
#cells tbody th { border-right-color: #999; border-bottom-color: #c0c0c0; }
#cells thead .current { color: #217346; background: #d2d2d2; border-bottom: 2px solid #217346; padding-top: 1px; }
#cells tbody .current { color: #217346; background: #d2d2d2; border-right: 2px solid #217346; }
#cells .corner { background: linear-gradient(135deg, #e6e6e6 70%, #b4b4b4 70%); }
#cells td { background: #fff; border-right: 1px solid #d4d4d4; border-bottom: 1px solid #d4d4d4; }
#cells .outside { background: #a0a0a0; border-color: #a0a0a0; }
#cells .tall { height: 26px; }
.drawing {
  position: absolute;
  left: 34px;
  top: 22px;
  font: 16px "Liberation Sans", Arial, sans-serif;
}
.force path, .dimension path { marker-end: url(#head); }
.dimension path { marker-start: url(#head); }
.labels .mid { text-anchor: middle; }
.labels .box { font-size: 17px; }
.labels .red { fill: #f00; }
.labels .large { font-size: 19px; }
.labels .note { font-size: 14px; }
.labels .sym { font-family: "Liberation Serif", serif; }

/* Scroll bars */
.vscroll { width: 20px; padding: 2px 3px 0 2px; display: flex; flex-direction: column; }
.vscroll button, .hscroll button { flex: none; width: 15px; height: 15px; background: #fff; border: 1px solid #ababab; }
.track { flex: 1; background: #dadada; }
.thumb { display: block; background: #fff; border: 1px solid #ababab; }
.vscroll .track { padding-top: 14px; }
.vscroll .thumb { height: 17px; }
.hside { width: 40%; height: 27px; margin-left: auto; display: flex; align-items: center; gap: 14px; padding-right: 6px; }
.hscroll { flex: 1; display: flex; }
.hscroll .thumb { width: 66%; height: 15px; }

/* Sheet tabs */
.sheetbar {
  flex: none;
  display: flex;
  align-items: flex-start;
  height: 28px;
  padding: 0 15px;
  border-top: 1px solid #999;
}
.sheetbar .nav { width: 28px; height: 27px; }
.sheet-tab {
  width: 39px;
  height: 26px;
  margin: -1px 0 0 29px;
  background: #fff;
  border: solid #999;
  border-width: 0 1px;
  border-bottom: 2px solid #217346;
  color: #217346;
  font-weight: 700;
}
.add { margin-left: 32px; height: 27px; }

/* Status bar */
.status {
  flex: none;
  display: flex;
  align-items: center;
  justify-content: flex-end;
  height: 23px;
  padding-right: 8px;
  background: #f3f3f3;
  border-top: 1px solid #c6c6c6;
  border-bottom: 3px solid #444;
}
.status button { width: 40px; height: 100%; }
.status .on { background: #c5c5c5; }
.status .step { width: 19px; }
.status input {
  width: 100px;
  height: 12px;
  appearance: none;
  background: linear-gradient(#aaa, #aaa) no-repeat center / 100% 1px;
}
.status input::-webkit-slider-thumb { appearance: none; width: 5px; height: 11px; background: #666; }
.status .percent { width: 34px; text-align: right; font-size: 11px; }
```
